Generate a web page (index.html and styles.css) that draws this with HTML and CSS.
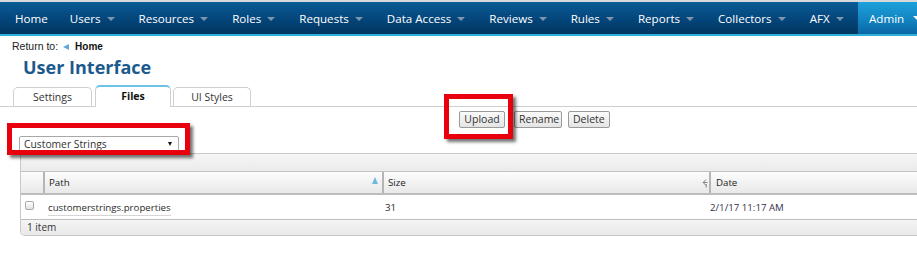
FILE: index.html
```html
<!DOCTYPE html>
<html>
<head>
<meta charset="utf-8">
<title>User Interface</title>
<link rel="stylesheet" href="styles.css">
</head>
<body>
<nav class="topnav">
  <a class="nav-item nav-home">Home</a>
  <a class="nav-item">Users<span class="caret"></span></a>
  <a class="nav-item">Resources<span class="caret"></span></a>
  <a class="nav-item">Roles<span class="caret"></span></a>
  <a class="nav-item">Requests<span class="caret"></span></a>
  <a class="nav-item">Data Access<span class="caret"></span></a>
  <a class="nav-item">Reviews<span class="caret"></span></a>
  <a class="nav-item">Rules<span class="caret"></span></a>
  <a class="nav-item">Reports<span class="caret"></span></a>
  <a class="nav-item">Collectors<span class="caret"></span></a>
  <a class="nav-item">AFX<span class="caret"></span></a>
  <a class="nav-item nav-active">Admin<span class="caret"></span></a>
</nav>

<div class="crumb">Return to: <span class="back-tri"></span><b class="crumb-home">Home</b></div>
<h1 class="title">User Interface</h1>

<div class="tabs">
  <div class="tab tab-settings">Settings</div>
  <div class="tab tab-active">Files</div>
  <div class="tab tab-styles">UI Styles</div>
</div>

<div class="actions">
  <button class="btn btn-upload">Upload</button>
  <button class="btn btn-rename">Rename</button>
  <button class="btn">Delete</button>
</div>

<div class="selector-row">
  <div class="select">Customer Strings<span class="sel-caret"></span></div>
</div>

<div class="grid">
  <div class="grid-toolbar"></div>
  <div class="grid-head">
    <div class="hc hc-check"></div>
    <div class="hc hc-path">Path<span class="sort"></span></div>
    <div class="hc hc-size">Size<svg class="resize" width="6" height="10" viewBox="0 0 6 10"><path d="M4 1.5 L1.2 4.5 L4 7.5 M1.2 4.5 H5.5 M4.2 6 V9.5" fill="none" stroke="#777" stroke-width="0.9"/></svg></div>
    <div class="hc hc-date">Date</div>
  </div>
  <div class="grid-row">
    <div class="rc rc-check"><span class="checkbox"></span></div>
    <div class="rc rc-path"><span class="filename">customerstrings.properties</span></div>
    <div class="rc rc-size">31</div>
    <div class="rc rc-date">2/1/17 11:17 AM</div>
  </div>
  <div class="grid-foot">1 item</div>
</div>

<div class="callout callout-select"></div>
<div class="callout callout-upload"></div>
</body>
</html>
```

FILE: styles.css
```css
html, body {
  margin: 0;
  padding: 0;
  background: #ffffff;
  overflow: hidden;
}
body {
  font-family: "Open Sans", "DejaVu Sans", sans-serif;
  color: #333;
  width: 917px;
  height: 257px;
  position: relative;
}

/* ---------- top navigation ---------- */
.topnav {
  display: flex;
  align-items: stretch;
  height: 32px;
  border-top: 2px solid #d6d9dc;
  border-bottom: 2px solid #30b0d9;
  background: linear-gradient(#0a5b96, #04457a 55%, #023660);
}
.nav-item {
  display: flex;
  align-items: center;
  padding: 0 11.5px;
  color: #ffffff;
  font-size: 11.6px;
  white-space: nowrap;
  margin-top: 1px;
  flex-shrink: 0;
}
.nav-home {
  padding-left: 15px;
  padding-right: 10.5px;
}
.caret {
  display: inline-block;
  width: 0;
  height: 0;
  margin-left: 6px;
  margin-right: 1px;
  border-left: 4px solid transparent;
  border-right: 4px solid transparent;
  border-top: 4px solid #7d95ad;
}
.nav-active {
  box-sizing: border-box;
  width: 59px;
  margin-left: auto;
  margin-top: 0;
  padding-left: 11px;
  padding-right: 0;
  overflow: hidden;
  background: linear-gradient(#1ca0da, #1387c4 50%, #0b66a5);
}
.nav-active .caret {
  border-top-color: #ffffff;
  margin-left: 9px;
  margin-right: 0;
}

/* ---------- breadcrumb & title ---------- */
.crumb {
  margin: 4px 0 0 12px;
  height: 13px;
  line-height: 13px;
  font-family: "Liberation Sans", Arial, sans-serif;
  font-size: 10.5px;
  color: #222;
  display: flex;
  align-items: center;
}
.back-tri {
  display: inline-block;
  width: 0;
  height: 0;
  margin-left: 5px;
  margin-right: 6px;
  border-top: 3.5px solid transparent;
  border-bottom: 3.5px solid transparent;
  border-right: 6px solid #62a6dc;
}
.crumb-home {
  font-size: 10px;
  font-weight: bold;
  color: #111;
}
.title {
  margin: 4px 0 0 23px;
  height: 20px;
  line-height: 20px;
  font-size: 18px;
  font-weight: 700;
  color: #1c5a8d;
}

/* ---------- tabs ---------- */
.tabs {
  display: flex;
  align-items: flex-end;
  margin-top: 8px;
  height: 21px;
  padding-left: 13px;
  border-bottom: 1px solid #cfcfcf;
}
.tab {
  box-sizing: border-box;
  height: 19px;
  border: 1px solid #cfcfcf;
  border-bottom: none;
  border-radius: 5px 5px 0 0;
  background: #ffffff;
  font-size: 10.5px;
  color: #333;
  display: flex;
  align-items: center;
  justify-content: center;
}
.tab-settings {
  width: 79px;
  margin-right: 3px;
}
.tab-active {
  width: 76px;
  height: 22px;
  margin-bottom: -1px;
  margin-right: 2px;
  border-top: 2px solid #6cc3e6;
  font-weight: 700;
  color: #111;
  padding-bottom: 2px;
}
.tab-styles {
  width: 78px;
}

/* ---------- action buttons ---------- */
.actions {
  display: flex;
  margin-top: 4px;
  padding-left: 459px;
  height: 17px;
}
.btn {
  box-sizing: border-box;
  height: 17px;
  padding: 0 4px;
  border: 1px solid #9a9a9a;
  border-radius: 2px;
  background: linear-gradient(#fbfbfb, #e4e4e4);
  font-family: "Open Sans", "DejaVu Sans", sans-serif;
  font-size: 10.5px;
  color: #333;
  line-height: 15px;
}
.btn-upload {
  width: 46px;
  margin-right: 9px;
}
.btn-rename {
  width: 48px;
  margin-right: 6px;
}

/* ---------- selector ---------- */
.selector-row {
  margin-top: 8px;
  padding-left: 19px;
  height: 16px;
}
.select {
  box-sizing: border-box;
  width: 160px;
  height: 16px;
  border: 1px solid #a8a8a8;
  border-radius: 2px;
  background: #ffffff;
  font-size: 10.3px;
  line-height: 14px;
  color: #333;
  padding-left: 4px;
  display: flex;
  align-items: center;
}
.sel-caret {
  margin-left: auto;
  margin-right: 6px;
  width: 0;
  height: 0;
  border-left: 2.5px solid transparent;
  border-right: 2.5px solid transparent;
  border-top: 4px solid #111;
}

/* ---------- grid ---------- */
.grid {
  margin: 1px 0 0 20px;
  border: 1px solid #c8c8c8;
  border-right: none;
  border-radius: 0 0 0 5px;
  overflow: hidden;
  font-size: 9.7px;
}
.grid-toolbar {
  height: 17px;
  background: linear-gradient(#f6f6f6, #ebebeb);
  border-bottom: 1px solid #c2c2c2;
}
.grid-head {
  display: flex;
  height: 21px;
  background: linear-gradient(#fdfdfd, #f2f2f2 50%, #e9e9e9);
  border-bottom: 2px solid #bdbdbd;
}
.hc {
  box-sizing: border-box;
  display: flex;
  align-items: center;
  color: #222;
  position: relative;
}
.hc-check {
  width: 22px;
}
.hc-path {
  width: 339px;
  border-left: 2px solid #b5b5b5;
  padding-left: 4px;
}
.hc-size {
  width: 327px;
  border-left: 2px solid #b5b5b5;
  padding-left: 4px;
}
.hc-date {
  flex: 1;
  border-left: 2px solid #b5b5b5;
  padding-left: 5px;
}
.sort {
  margin-left: auto;
  margin-right: 4px;
  margin-top: -4px;
  width: 0;
  height: 0;
  border-left: 3.5px solid transparent;
  border-right: 3.5px solid transparent;
  border-bottom: 7px solid #6cb8e0;
}
.resize {
  margin-left: auto;
  margin-right: 1px;
  margin-top: 1px;
}
.grid-row {
  display: flex;
  height: 24px;
  align-items: center;
  background: #ffffff;
  border-bottom: 1px solid #bdbdbd;
}
.rc {
  box-sizing: border-box;
  color: #2b2b2b;
}
.rc-check {
  width: 22px;
  padding-left: 4px;
  display: flex;
  align-items: center;
  margin-top: -4px;
}
.checkbox {
  display: inline-block;
  box-sizing: border-box;
  width: 9px;
  height: 9px;
  border: 1px solid #a9a9a9;
  border-radius: 2px;
  background: linear-gradient(#ffffff, #e3e3e3);
}
.rc-path {
  width: 339px;
  padding-left: 5px;
}
.filename {
  border-bottom: 1px solid #d6d6d6;
  padding-bottom: 1px;
}
.rc-size {
  width: 327px;
  padding-left: 3px;
}
.rc-date {
  flex: 1;
  padding-left: 1px;
  color: #33334a;
}
.grid-foot {
  height: 15px;
  line-height: 15px;
  padding-left: 6px;
  font-size: 10px;
  color: #333;
  background: linear-gradient(#f4f4f4, #e9e9e9);
}

/* ---------- red annotation callouts (overlay) ---------- */
.callout {
  position: absolute;
  box-sizing: border-box;
  border: 5px solid #e8000c;
  box-shadow: 3px 3px 3px rgba(0, 0, 0, 0.55);
}
.callout-select {
  left: 7px;
  top: 123px;
  width: 183px;
  height: 32px;
}
.callout-upload {
  left: 444px;
  top: 94px;
  width: 69px;
  height: 45px;
}
```
